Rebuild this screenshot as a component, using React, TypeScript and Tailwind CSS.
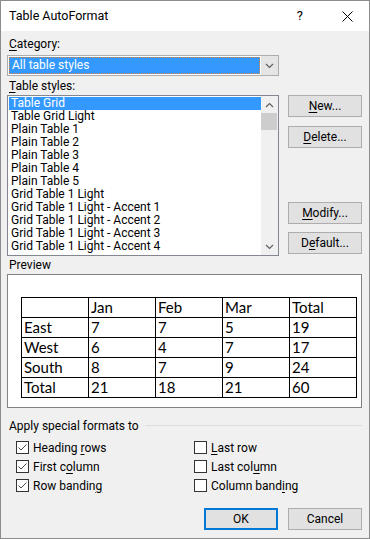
import React from 'react';

const tableStyles = [
  'Table Grid',
  'Table Grid Light',
  'Plain Table 1',
  'Plain Table 2',
  'Plain Table 3',
  'Plain Table 4',
  'Plain Table 5',
  'Grid Table 1 Light',
  'Grid Table 1 Light - Accent 1',
  'Grid Table 1 Light - Accent 2',
  'Grid Table 1 Light - Accent 3',
  'Grid Table 1 Light - Accent 4',
];

const preview = [
  ['', 'Jan', 'Feb', 'Mar', 'Total'],
  ['East', '7', '7', '5', '19'],
  ['West', '6', '4', '7', '17'],
  ['South', '8', '7', '9', '24'],
  ['Total', '21', '18', '21', '60'],
];

const U: React.FC<{ children: React.ReactNode }> = ({ children }) => (
  <span className="underline underline-offset-[2px]">{children}</span>
);

const Button: React.FC<{ children: React.ReactNode; primary?: boolean; className?: string }> = ({ children, primary, className }) => (
  <div
    className={`w-[74px] h-[22px] flex items-center justify-center bg-[#e1e1e1] ${
      primary ? 'border-2 border-[#0078d7]' : 'border border-[#adadad]'
    } ${className ?? ''}`}
  >
    {children}
  </div>
);

const Check: React.FC<{ checked?: boolean; children: React.ReactNode }> = ({ checked, children }) => (
  <div className="h-[19px] flex items-center">
    <div className="w-[13px] h-[13px] border border-[#333333] bg-white flex items-center justify-center">
      {checked && (
        <svg width="11" height="11" viewBox="0 0 11 11">
          <polyline points="1.5,5.5 4,8 9.5,2.5" fill="none" stroke="#4a4a4a" strokeWidth="1" />
        </svg>
      )}
    </div>
    <span className="ml-[4px]">{children}</span>
  </div>
);

const Chevron: React.FC<{ dir: 'up' | 'down'; color?: string }> = ({ dir, color = '#606060' }) => (
  <svg width="9" height="6" viewBox="0 0 9 6">
    <polyline
      points={dir === 'up' ? '1,5 4.5,1.5 8,5' : '1,1 4.5,4.5 8,1'}
      fill="none"
      stroke={color}
      strokeWidth="1.2"
    />
  </svg>
);

export default function App() {
  return (
    <div className="w-[370px] h-[539px] border border-[#8c8c8c] bg-[#f0f0f0] flex flex-col text-[12px] text-black font-['Roboto',Arial,sans-serif]">
      {/* Title bar */}
      <div className="h-[30px] bg-white flex items-center pl-[8px]">
        <span className="flex-1 text-[12.5px]">Table AutoFormat</span>
        <span className="text-[13px] mr-[39px]">?</span>
        <svg width="11" height="11" viewBox="0 0 11 11" className="mr-[16px]">
          <path d="M0.5 0.5 L10.5 10.5 M10.5 0.5 L0.5 10.5" stroke="#000" strokeWidth="1" />
        </svg>
      </div>

      <div className="flex-1 px-[6px]">
        <div className="mt-[6px] h-[15px] leading-[15px] pl-[2px]">
          <U>C</U>ategory:
        </div>
        <div className="mt-[3px] w-[272px] h-[21px] border border-[#adadad] bg-white flex">
          <div className="w-[253px] p-[1px]">
            <div className="h-full bg-[#3399ff] text-white leading-[17px] pl-[3px] outline-1 outline-dotted outline-[#e0803a] -outline-offset-1">
              All table styles
            </div>
          </div>
          <div className="w-[17px] bg-[#e5e5e5] flex items-center justify-center">
            <Chevron dir="down" />
          </div>
        </div>

        <div className="mt-[3px] h-[15px] leading-[15px] pl-[2px]">
          <U>T</U>able styles:
        </div>
        <div className="mt-[1px] flex">
          <div className="w-[272px] h-[161px] border border-[#828790] bg-white flex">
            <div className="w-[253px] pt-[1px] pl-[1px]">
              {tableStyles.map((s, i) => (
                <div
                  key={s}
                  className={`h-[13px] leading-[13px] pl-[2px] ${i === 0 ? 'bg-[#3399ff] text-white' : ''}`}
                >
                  {s}
                </div>
              ))}
            </div>
            <div className="w-[17px] bg-[#f0f0f0] flex flex-col">
              <div className="h-[17px] flex items-center justify-center">
                <Chevron dir="up" />
              </div>
              <div className="h-[17px] w-[16px] bg-[#cdcdcd]" />
              <div className="flex-1" />
              <div className="h-[17px] flex items-center justify-center">
                <Chevron dir="down" />
              </div>
            </div>
          </div>
          <div className="ml-[9px] flex flex-col">
            <Button>
              <U>N</U>ew...
            </Button>
            <Button className="mt-[9px]">
              <U>D</U>elete...
            </Button>
            <Button className="mt-[54px]">
              <U>M</U>odify...
            </Button>
            <Button className="mt-[8px]">
              D<U>e</U>fault...
            </Button>
          </div>
        </div>

        <div className="mt-[2px] h-[15px] leading-[15px] pl-[2px]">Preview</div>
        <div className="mt-[1px] w-[355px] h-[134px] border border-[#828282] bg-white pt-[22px] pl-[13px]">
          <div className="w-[336px] border-l border-t border-black font-['Lato',sans-serif] text-[15px]">
            {preview.map((row, r) => (
              <div key={r} className="flex">
                {row.map((cell, c) => (
                  <div key={c} className="w-[67px] h-[20px] border-r border-b border-black pl-[2px] leading-[19px]">
                    {cell}
                  </div>
                ))}
              </div>
            ))}
          </div>
        </div>

        <div className="mt-[10px] h-[15px] flex items-center pl-[2px]">
          <span>Apply special formats to</span>
          <div className="flex-1 h-px bg-[#dcdcdc] ml-[6px] mr-[1px]" />
        </div>
        <div className="mt-[5px] pl-[9px] flex">
          <div className="w-[178px]">
            <Check checked>
              Heading <U>r</U>ows
            </Check>
            <Check checked>
              First c<U>o</U>lumn
            </Check>
            <Check checked>
              Row bandin<U>g</U>
            </Check>
          </div>
          <div>
            <Check>
              <U>L</U>ast row
            </Check>
            <Check>
              Last col<U>u</U>mn
            </Check>
            <Check>
              Column band<U>i</U>ng
            </Check>
          </div>
        </div>

        <div className="mt-[13px] flex justify-end mr-[1px]">
          <Button primary>OK</Button>
          <Button className="ml-[10px]">Cancel</Button>
        </div>
      </div>
    </div>
  );
}
